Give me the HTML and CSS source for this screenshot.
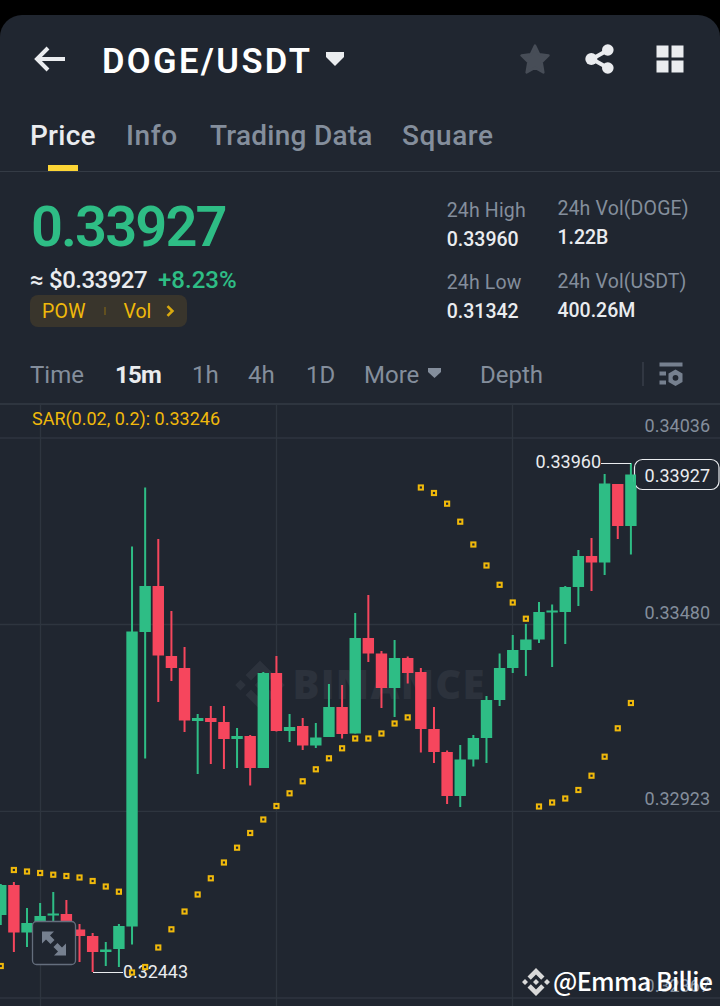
FILE: index.html
```html
<!DOCTYPE html>
<html lang="en">
<head>
<meta charset="utf-8">
<title>DOGE/USDT</title>
<link rel="stylesheet" href="styles.css">
</head>
<body>
<main class="sheet">
  <header class="header">
    <svg class="back" width="32" height="26" viewBox="0 0 32 26"><path d="M14 2 3 13l11 11M3 13h28" fill="none" stroke="#eaecef" stroke-width="4"/></svg>
    <h1 class="pair">DOGE/USDT</h1>
    <svg class="caret" width="18" height="14" viewBox="0 0 18 14"><path d="M0 0h18v5l-9 9-9-9z" fill="#eaecef"/></svg>
    <div class="actions">
      <svg width="30" height="30" viewBox="0 0 30 30"><path d="m15 1.5 4.2 8.8 9.3 1.2-6.8 6.7 1.7 10.3-8.4-4.7-8.4 4.7 1.7-10.3-6.8-6.7 9.3-1.2z" fill="#474d57" stroke="#474d57" stroke-width="2.4" stroke-linejoin="round"/></svg>
      <svg width="30" height="30" viewBox="0 0 30 30"><path d="M23 6 7 15l16 9" fill="none" stroke="#eaecef" stroke-width="4"/><g fill="#eaecef"><circle cx="22.800" cy="6" r="5.800"/><circle cx="6.300" cy="15" r="6"/><circle cx="22.800" cy="24" r="5.800"/></g></svg>
      <svg width="28" height="28" viewBox="0 0 28 28"><path d="M.5.5h12v12H.5zM15.500.5h12v12h-12zM.5 15.500h12v12H.5zM15.500 15.500h12v12h-12z" fill="#eaecef"/></svg>
    </div>
  </header>
  <nav class="tabs">
    <span class="tab tab-price">Price</span>
    <span class="tab tab-info">Info</span>
    <span class="tab tab-data">Trading Data</span>
    <span class="tab tab-square">Square</span>
  </nav>
  <section class="summary">
    <div class="quote">
      <div class="last">0.33927</div>
      <div class="fiat"><span class="approx">≈</span><span class="usd">$0.33927</span><span class="change">+8.23%</span></div>
      <div class="tags"><span class="pow">POW</span><i class="divider"></i><span class="vol">Vol</span><svg width="9" height="14" viewBox="0 0 9 14"><path d="m1.500 2 5 5-5 5" fill="none" stroke="#d9a90f" stroke-width="2.6"/></svg></div>
    </div>
    <dl class="stats">
      <dt>24h High</dt><dd>0.33960</dd>
      <dt>24h Low</dt><dd>0.31342</dd>
    </dl>
    <dl class="stats stats-volume">
      <dt>24h Vol(DOGE)</dt><dd>1.22B</dd>
      <dt>24h Vol(USDT)</dt><dd>400.26M</dd>
    </dl>
  </section>
  <nav class="frames">
    <span>Time</span><span class="current">15m</span><span>1h</span><span>4h</span><span>1D</span>
    <span class="more">More<svg width="13" height="10" viewBox="0 0 13 10"><path d="M0 0h13v4L6.500 10 0 4z" fill="#848e9c"/></svg></span>
    <span class="depth">Depth</span>
    <svg class="settings" width="18" height="26" viewBox="0 0 18 26"><path d="M1 1v24" stroke="#373e48" stroke-width="1.500"/></svg>
    <svg class="gear" width="24" height="26" viewBox="0 0 24 26"><path d="M.5 1.500h23v4H.5zM.5 10.500H7v4H.5zM.5 19.500H7v4H.5z" fill="#76808f"/><path fill-rule="evenodd" d="m16.500 8.500 7 4v8.500l-7 4-7-4v-8.500zm0 5.400a2.900 2.900 0 1 0 0 5.800 2.900 2.900 0 0 0 0-5.800z" fill="#76808f"/></svg>
  </nav>
  <svg class="chart" width="720" height="603" viewBox="0 403 720 603">
    <g class="grid">
      <path d="M0 404h720" stroke-width="2"/>
      <path d="M0 438h720M0 624.500h720M0 811.300h720M0 998h720M40.500 405v601M276.500 405v601M512.500 405v601" stroke-width="1.300"/>
    </g>
    <g class="brand">
      <path d="m260 660.500 14.500 14.500-5.500 5.500-9-9-9 9-5.500-5.500zM240.500 679.800l5.300 5.300-5.300 5.300-5.300-5.300zM279.500 679.800l5.300 5.300-5.300 5.300-5.300-5.300zM260 679.800l5.300 5.300-5.300 5.300-5.300-5.300zM251 689.500l9 9 9-9 5.500 5.500-14.500 14.500-14.500-14.500z"/>
      <text x="292.500" y="699" textLength="192">BINANCE</text>
    </g>
    <g id="candles"></g>
    <path d="M93 972.500h30M601 463.500h30" stroke="#eaecef" stroke-width="1.200"/>
    <g class="labels">
      <text class="sar-label" x="32" y="425" textLength="188">SAR(0.02, 0.2): 0.33246</text>
      <text class="axis" x="644.500" y="432" textLength="65.500">0.34036</text>
      <text class="axis" x="644.500" y="619" textLength="65.500">0.33480</text>
      <text class="axis" x="644.500" y="805" textLength="65.500">0.32923</text>
      <text class="axis" x="644.500" y="992" textLength="65.500">0.32367</text>
      <text class="extreme" x="535.500" y="468" textLength="65.500">0.33960</text>
      <text class="extreme" x="123" y="978" textLength="65">0.32443</text>
    </g>
    <rect x="634.500" y="459.500" width="84.500" height="30" rx="8" fill="#202630" stroke="#eaecef" stroke-width="1.200"/>
    <path d="M634 474.500h2v15h-2z" fill="#2ebd85"/>
    <text class="extreme" x="644.500" y="482" textLength="65.500">0.33927</text>
    <g id="sar"></g>
    <rect x="32.500" y="921.500" width="43" height="43" rx="4" fill="#202630" stroke="#646e7d" stroke-width="1.300"/>
    <path d="M42 931.500h12l-4 4 4.500 4.500-4 4-4.500-4.500-4 4zM66 955.500H54l4-4-4.500-4.500 4-4 4.500 4.500 4-4z" fill="#76808f"/>
    <g class="handle">
      <path d="m536 968 8.500 8.500-3.300 3.300-5.200-5.200-5.200 5.200-3.300-3.300zM525 979l3 3-3 3-3-3zM536 979l3 3-3 3-3-3zM547 979l3 3-3 3-3-3zM530.800 984.200l5.200 5.200 5.200-5.200 3.300 3.300-8.500 8.500-8.500-8.500z"/>
      <text x="553" y="990.500" textLength="160">@Emma Billie</text>
    </g>
  </svg>
</main>
<script src="chart.js"></script>
</body>
</html>
```
FILE: styles.css
```css
* { box-sizing: border-box; }
body { margin: 0; padding-top: 15px; background: #000; font-family: Roboto, "Liberation Sans", sans-serif; color: #eaecef; }
.sheet { height: 991px; overflow: hidden; background: #202630; border-radius: 22px 22px 0 0; }
.header { display: flex; align-items: center; height: 88px; padding: 0 36px 0 34px; }
.back { margin-right: 36px; }
.pair { width: 208px; margin: 3px 16px 0 0; color: #fff; font-size: 34.500px; line-height: 40px; font-weight: 600; letter-spacing: 2.400px; white-space: nowrap; }
.actions { display: flex; align-items: center; gap: 35px; margin-left: auto; }
.actions svg:last-child { margin-left: 6px; }
.tabs { display: grid; grid-template-columns: 96px 84px 192px 110px; height: 69px; padding: 0 30px; border-bottom: 1px solid #343b45; font-size: 28px; line-height: 66px; font-weight: 500; color: #848e9c; white-space: nowrap; }
.tab { letter-spacing: .25px; }
.tab-info, .tab-square { letter-spacing: .6px; }
.tab-price { color: #eaecef; background: linear-gradient(#fcd535, #fcd535) 18px 100% / 30px 6px no-repeat; }
.summary { display: flex; height: 173px; padding: 0 30px; }
.quote { width: 418px; }
.last { margin-top: 24px; padding-left: 1px; height: 64px; color: #2ebd85; font-size: 56px; line-height: 62px; font-weight: 600; letter-spacing: -1.900px; }
.fiat { display: flex; height: 35px; line-height: 40px; font-size: 24px; font-weight: 500; }
.approx { width: 19px; }
.usd { width: 109px; letter-spacing: -.5px; }
.change { color: #2ebd85; }
.tags { display: flex; align-items: center; width: 157px; height: 32px; padding: 0 12px; border-radius: 8px; background: #39352c; color: #f0b90b; font-size: 19.500px; }
.pow { width: 63px; letter-spacing: .3px; }
.divider { width: 2px; height: 8px; margin-right: 17px; background: #62501f; }
.vol { width: 43px; }
.stats { width: 111px; margin: 25px 0 0; font-size: 19.500px; line-height: 28px; white-space: nowrap; }
.stats-volume { width: 133px; margin-top: 23px; }
.stats dt { color: #848e9c; height: 29px; letter-spacing: .15px; }
.stats dd { margin: 0; height: 43px; font-weight: 500; }
.stats-volume dd { height: 44px; }
.frames { display: grid; grid-template-columns: 85px 77px 56px 58px 58px 116px 162px 17px auto; align-items: center; height: 58px; padding-left: 30px; color: #848e9c; font-size: 24px; white-space: nowrap; }
.frames span { padding-top: 2px; }
.frames .current { color: #eaecef; font-weight: 700; letter-spacing: -.8px; }
.more { display: flex; align-items: center; gap: 9px; }
.more svg { margin-top: -4px; }
.chart { display: block; font-size: 18px; }
.grid path { stroke: #2e353f; fill: none; }
.brand { fill: #2c323c; font-family: "Open Sans", sans-serif; font-weight: 800; font-size: 40px; }
.sar-label { fill: #f0b90b; }
.axis { fill: #848e9c; }
.extreme { fill: #eaecef; }
.up { fill: #2ebd85; }
.down { fill: #f6465d; }
.dot { fill: #202630; stroke: #f0b90b; stroke-width: 2; }
.handle { fill: #d9d9d9; font-family: "Noto Sans CJK SC", sans-serif; }
.handle text { fill: #fff; font-size: 25px; font-weight: 500; }
```
FILE: chart.js
```js
// Each row: direction, high, body top, body bottom, low, SAR (chart pixels).
const series = [
  ['up',884,885,915,925,966],['down',882,885,932.5,952,870],['up',908,923,932.5,947,871.5],
  ['up',903,916,925,928,873],['up',892,913.5,915.5,925,874.7],['down',900,914,930,932,876],
  ['down',924,929.5,936,962,877.5],['down',933,936,952,972,881],['up',942,949.5,952,966,886.5],
  ['up',924,926,949,967,891.7],['up',546.5,631.5,926.5,944.5,972.5],['up',487.5,586,632,758.5,967],
  ['down',539,586,655.5,702,947.5],['down',611,656,668,681,929.3],['down',647,668,720.5,732,911.5],
  ['up',714,718,721,774,894.5],['down',706,718,722,764,878.3],['down',706,722,739,769,862.5],
  ['up',728,736,739,768,847.7],['down',735,736,768,785.5,833],['up',672,673,768,768,819.5],
  ['down',656,673,731,731.5,806],['up',714,727,731,742,793.3],['down',718,726,745.5,750,781.3],
  ['up',723,737.5,745.5,748,769.3],['up',684,707,737,737,758.3],['down',685,707,734,738.5,748.3],
  ['up',613,638,733.5,733.5,738.5],['down',595,638,653.5,662,738.5],['down',651,653.5,688,708,733.5],
  ['up',640,658,688,717,723.5],['down',656.5,658,673,683.5,717.4],['down',668,672,729,752.5,487.5],
  ['down',707,729,752,763,493],['down',750.5,752,796,804,503.7],['up',745,759.5,796,807,521.7],
  ['up',735,738,759.5,766.5,544.5],['up',696,700,738,763,565.5],['up',653.5,668,700,706,584.8],
  ['up',635,650,668,673,602.5],['up',624,639.5,650,676,618.7],['up',602,612,639.5,643,806.5],
  ['up',604.5,610.5,612.5,667,802.5],['up',586,587,612,644,798.5],['up',550,556,587,606,790],
  ['down',538,556,562.5,591,775.7],['up',474,483.5,562.5,575,756.7],['down',484,484,526,539,728.3],
  ['up',463,474.5,526,554.5,703]
];
const ns = 'http://www.w3.org/2000/svg';
function rect(parent, cls, x, y, width, height) {
  const el = document.createElementNS(ns, 'rect');
  el.setAttribute('class', cls);
  Object.entries({ x, y, width, height }).forEach(([k, v]) => el.setAttribute(k, v));
  parent.appendChild(el);
}
const candles = document.getElementById('candles');
const sar = document.getElementById('sar');
series.forEach(([dir, high, top, bottom, low, dot], i) => {
  const x = 0.75 + 13.128 * i;
  rect(candles, dir, x - 1, high, 2, low - high);
  rect(candles, dir, x - 5.7, top, 11.4, bottom - top);
  rect(sar, 'dot', x - 2.1, dot - 2.1, 4.2, 4.2);
});
```
